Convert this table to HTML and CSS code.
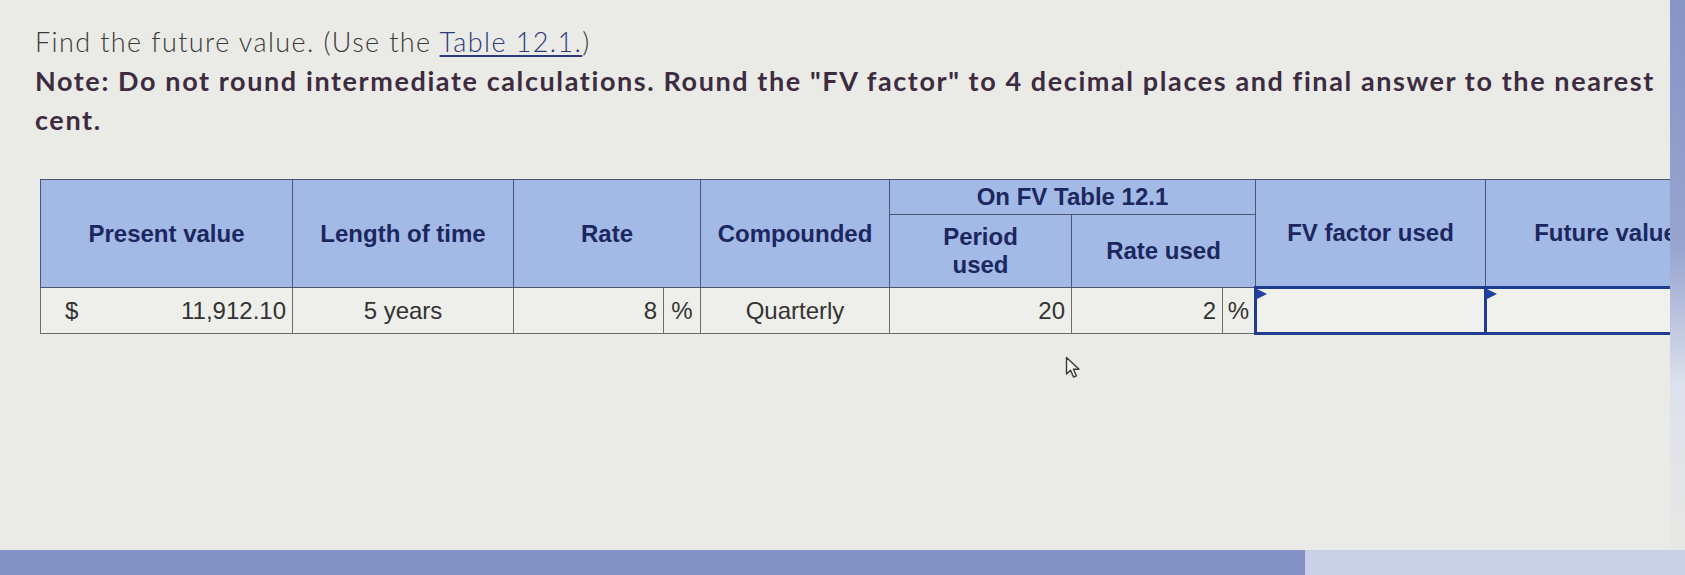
FILE: index.html
```html
<!DOCTYPE html>
<html lang="en">
<head>
<meta charset="utf-8">
<title>Future value</title>
<link rel="stylesheet" href="styles.css">
</head>
<body>
<div class="screen">
  <div class="main">
    <div class="question">
      <p class="intro">Find the future value. (Use the <a class="link" href="#">Table 12.1.</a>)</p>
      <p class="note">Note: Do not round intermediate calculations. Round the "FV factor" to 4 decimal places and final answer to the nearest cent.</p>
    </div>
    <div class="table-wrap">
      <table class="fv">
        <colgroup>
          <col class="c-pv"><col class="c-len"><col class="c-rate"><col class="c-pct"><col class="c-comp"><col class="c-per"><col class="c-ru"><col class="c-pct2"><col class="c-fvf"><col class="c-fv">
        </colgroup>
        <thead>
          <tr class="h1">
            <th rowspan="2">Present value</th>
            <th rowspan="2">Length of time</th>
            <th rowspan="2" colspan="2">Rate</th>
            <th rowspan="2">Compounded</th>
            <th colspan="3" class="group">On FV Table 12.1</th>
            <th rowspan="2" class="in-head">FV factor used</th>
            <th rowspan="2" class="in-head">Future value</th>
          </tr>
          <tr class="h2">
            <th class="wrap">Period<br>used</th>
            <th colspan="2">Rate used</th>
          </tr>
        </thead>
        <tbody>
          <tr class="data">
            <td><div class="money"><span>$</span><span>11,912.10</span></div></td>
            <td class="center">5 years</td>
            <td class="num">8</td>
            <td class="pct">%</td>
            <td class="center">Quarterly</td>
            <td class="num">20</td>
            <td class="num">2</td>
            <td class="pct">%</td>
            <td class="input"><span class="flag"></span></td>
            <td class="input"><span class="flag"></span></td>
          </tr>
        </tbody>
      </table>
    </div>
    <svg class="cursor" width="18" height="24" viewBox="0 0 18 24"><path d="M1.5 1.5 L1.5 18 L5.5 14.2 L8.6 21 L11.4 19.8 L8.4 13.2 L14 13.2 Z" fill="#f4f4f2" stroke="#3a3a3a" stroke-width="1.4" stroke-linejoin="round"/></svg>
  </div>
  <div class="side"></div>
</div>
<div class="hscroll"><div class="thumb"></div><div class="track"></div></div>
</body>
</html>
```
FILE: styles.css
```css
html, body {
  margin: 0;
  padding: 0;
}
body {
  width: 1685px;
  height: 575px;
  overflow: hidden;
  background: #eaeae6;
  display: flex;
  flex-direction: column;
  font-family: "Liberation Sans", Arial, sans-serif;
}
.screen {
  display: flex;
  flex: 1;
  min-height: 0;
}
.main {
  width: 1670px;
  position: relative;
}
.side {
  width: 15px;
  background: linear-gradient(#8795c6, #97a4cf 45%, #dde1ec 70%, #e8e8e4);
}
.question {
  padding: 22px 0 0 35px;
}
.question p {
  margin: 0;
  line-height: 39px;
}
.intro {
  font-family: Lato, "Open Sans", sans-serif;
  font-weight: 300;
  font-size: 27px;
  letter-spacing: 1.4px;
  color: #3a3a3a;
}
.link {
  color: #2d3a7c;
  text-decoration: underline;
  text-underline-offset: 3px;
}
.note {
  font-family: Lato, "Open Sans", sans-serif;
  font-weight: 700;
  font-size: 27px;
  letter-spacing: 1.6px;
  color: #3d2c3f;
  width: 1630px;
}
.table-wrap {
  margin: 40px 0 0 40px;
  width: 1630px;
  overflow: hidden;
}
.fv {
  border-collapse: collapse;
  table-layout: fixed;
  width: 1685px;
  font-size: 24px;
}
.c-pv { width: 252px; }
.c-len { width: 221px; }
.c-rate { width: 150px; }
.c-pct { width: 37px; }
.c-comp { width: 189px; }
.c-per { width: 182px; }
.c-ru { width: 151px; }
.c-pct2 { width: 33px; }
.c-fvf { width: 230px; }
.c-fv { width: 240px; }
.fv th {
  background: #a3b9e6;
  color: #1b275e;
  font-weight: 700;
  border: 1px solid #4b5672;
  padding: 0 6px;
  line-height: 28px;
  text-align: center;
  vertical-align: middle;
}
.h1 { height: 35px; }
.h2 { height: 73px; }
.fv td {
  background: #eeeeea;
  color: #333;
  border: 1px solid #6c6c6c;
  height: 43px;
  padding: 0 6px;
  vertical-align: middle;
  white-space: nowrap;
}
.money {
  display: flex;
  justify-content: space-between;
  padding-left: 18px;
}
.center { text-align: center; }
.num { text-align: right; }
.fv td.pct { text-align: center; padding: 0; }
.fv td.input {
  position: relative;
  border: 3px solid #1f3c90;
  background: #f0f0ec;
}
.flag {
  position: absolute;
  left: 0;
  top: 0;
  width: 0;
  height: 0;
  border-left: 10px solid #2143a0;
  border-top: 5px solid transparent;
  border-bottom: 5px solid transparent;
}
.cursor {
  position: absolute;
  left: 1065px;
  top: 356px;
}
.hscroll {
  display: flex;
  height: 25px;
  flex: none;
}
.thumb {
  width: 1305px;
  background: #8391c4;
}
.track {
  flex: 1;
  background: #cad0e6;
}
```
